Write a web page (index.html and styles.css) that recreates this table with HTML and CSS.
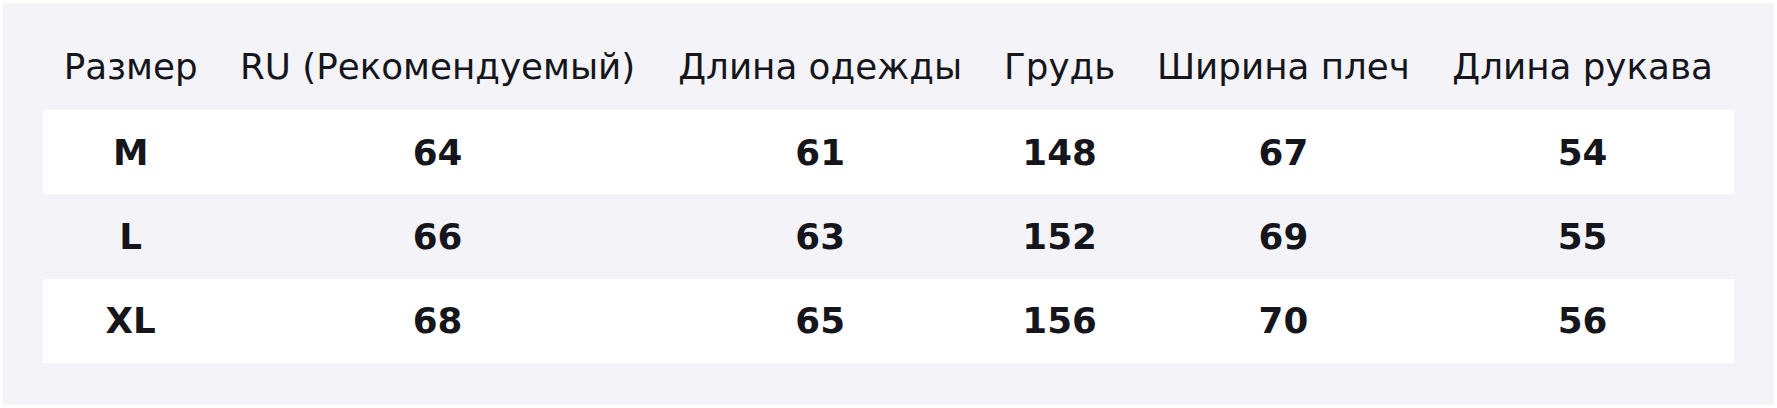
FILE: index.html
```html
<!DOCTYPE html>
<html lang="ru">
<head>
<meta charset="utf-8">
<title>Таблица размеров</title>
<link rel="stylesheet" href="styles.css">
</head>
<body>
<div class="panel">
  <table class="sizes">
    <thead>
      <tr>
        <th>Размер</th>
        <th>RU (Рекомендуемый)</th>
        <th>Длина одежды</th>
        <th>Грудь</th>
        <th>Ширина плеч</th>
        <th>Длина рукава</th>
      </tr>
    </thead>
    <tbody>
      <tr class="odd"><td>M</td><td>64</td><td>61</td><td>148</td><td>67</td><td>54</td></tr>
      <tr class="even"><td>L</td><td>66</td><td>63</td><td>152</td><td>69</td><td>55</td></tr>
      <tr class="odd"><td>XL</td><td>68</td><td>65</td><td>156</td><td>70</td><td>56</td></tr>
    </tbody>
  </table>
</div>
</body>
</html>
```
FILE: styles.css
```css
html, body {
  margin: 0;
  padding: 0;
  background: #ffffff;
}
body {
  padding: 3px;
  font-family: "DejaVu Sans", "Noto Sans", sans-serif;
  color: #15151c;
}
.panel {
  background: #f4f4f8;
  padding: 40px;
  height: 402px;
  box-sizing: border-box;
}
.sizes {
  width: 100%;
  border-collapse: collapse;
  border-spacing: 0;
}
.sizes th {
  font-weight: normal;
  font-size: 35.7px;
  line-height: 41px;
  height: 67px;
  padding: 3px 20px 23px;
  text-align: center;
  white-space: nowrap;
  vertical-align: top;
  box-sizing: border-box;
}
.sizes td {
  font-weight: bold;
  font-size: 35.7px;
  height: 84.33px;
  padding: 0 20px;
  text-align: center;
  vertical-align: middle;
  box-sizing: border-box;
}
.sizes tr.odd td {
  background: #ffffff;
}
.sizes tr.even td {
  background: transparent;
}
```
